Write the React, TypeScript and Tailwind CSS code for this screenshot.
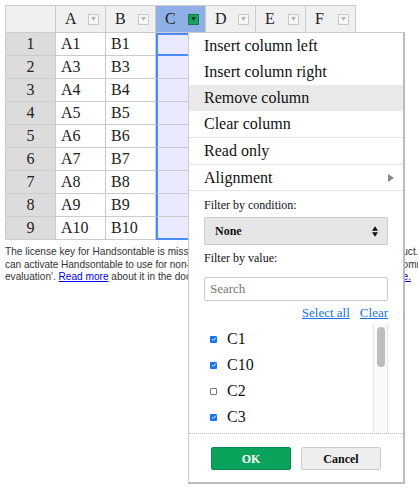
import React from "react";

const cols = ["A", "B", "C", "D", "E", "F"];
const rows = [
  ["A1", "B1"],
  ["A3", "B3"],
  ["A4", "B4"],
  ["A5", "B5"],
  ["A6", "B6"],
  ["A7", "B7"],
  ["A8", "B8"],
  ["A9", "B9"],
  ["A10", "B10"],
];

const serif = "font-['Liberation_Serif',_'Times_New_Roman',_serif]";

function HeaderButton({ active }: { active?: boolean }) {
  return (
    <span
      className={
        active
          ? "flex h-[11px] w-[11px] items-center justify-center border border-[#0b8043] bg-[#19a15f]"
          : "flex h-[11px] w-[11px] items-center justify-center border border-[#c8c8c8] bg-[#f7f7f7]"
      }
    >
      <svg viewBox="0 0 6 5" className="h-[4px] w-[5px]">
        <path d="M0 0h6L3 5z" fill={active ? "#0d3b22" : "#b5b5b5"} />
      </svg>
    </span>
  );
}

function Grid() {
  return (
    <div className={`${serif} inline-flex flex-col border-l border-t border-[#ccc] text-[16px] text-[#222]`}>
      <div className="flex h-[27px]">
        <div className="w-[50px] border-b border-r border-[#ccc] bg-[#f0f0f0]" />
        {cols.map((c) => (
          <div
            key={c}
            className={
              c === "C"
                ? "flex w-[50px] items-center border-b border-r border-[#ccc] bg-[#8eb0e7] pl-[9px]"
                : "flex w-[50px] items-center border-b border-r border-[#ccc] bg-[#f0f0f0] pl-[9px]"
            }
          >
            <span className="w-[23px]">{c}</span>
            <HeaderButton active={c === "C"} />
          </div>
        ))}
      </div>
      {rows.map((r, i) => (
        <div key={i} className="flex h-[23px]">
          <div className="flex w-[50px] items-center justify-center border-b border-r border-[#ccc] bg-[#dcdcdc]">
            {i + 1}
          </div>
          <div className="flex w-[50px] items-center border-b border-r border-[#ccc] pl-[5px]">{r[0]}</div>
          <div className="flex w-[50px] items-center border-b border-r border-[#ccc] pl-[5px]">{r[1]}</div>
          <div
            className={
              i === 0
                ? "w-[50px] border-2 border-[#4b89ff] bg-[#e9e9ff]"
                : i === rows.length - 1
                  ? "w-[50px] border-b-2 border-l-2 border-r border-[#ccc] border-b-[#4b89ff] border-l-[#4b89ff] bg-[#e9e9ff]"
                  : "w-[50px] border-b border-l-2 border-r border-[#ccc] border-l-[#4b89ff] bg-[#e9e9ff]"
            }
          />
          <div className="w-[50px] border-b border-r border-[#ccc]" />
          <div className="w-[50px] border-b border-r border-[#ccc]" />
          <div className="w-[50px] border-b border-r border-[#ccc]" />
        </div>
      ))}
    </div>
  );
}

function Check({ on }: { on: boolean }) {
  return on ? (
    <span className="flex h-[7px] w-[7px] items-center justify-center rounded-[1px] bg-[#1a73e8]">
      <svg viewBox="0 0 8 8" className="h-[6px] w-[6px]">
        <path d="M1.5 4.2 3.2 5.8 6.5 2.2" stroke="#fff" strokeWidth="1.3" fill="none" />
      </svg>
    </span>
  ) : (
    <span className="h-[7px] w-[7px] rounded-[1px] border border-[#777] bg-white" />
  );
}

const items = [
  { label: "Insert column left", h: "h-[26px]" },
  { label: "Insert column right", h: "h-[26px]" },
  { label: "Remove column", h: "h-[26px]", hover: true },
  { label: "Clear column", h: "h-[27px]", sep: true },
  { label: "Read only", h: "h-[27px]", sep: true },
  { label: "Alignment", h: "h-[26px]", sub: true, sep: true },
];

const values = [
  { v: "C1", on: true },
  { v: "C10", on: true },
  { v: "C2", on: false },
  { v: "C3", on: true },
  { v: "C4", on: true },
];

function Menu() {
  return (
    <div
      className={`${serif} absolute left-[188px] top-[32px] flex w-[217px] flex-col border-b-2 border-l border-r-2 border-t border-[#ccc] border-b-[#bbb] border-r-[#bbb] bg-white text-[16px] text-[#111]`}
    >
      {items.map((it) => (
        <div
          key={it.label}
          className={`flex ${it.h} items-center justify-between pl-[15px] pr-[9px] ${it.hover ? "bg-[#e9e9e9]" : ""} ${it.sep ? "border-b border-[#e6e6e6]" : ""}`}
        >
          <span>{it.label}</span>
          {it.sub && (
            <svg viewBox="0 0 6 8" className="h-[8px] w-[6px]">
              <path d="M0 0 6 4 0 8z" fill="#8a8a8a" />
            </svg>
          )}
        </div>
      ))}
      <div className="flex flex-col px-[15px] pt-[7px] text-[12px]">
        <div className="leading-[14px]">Filter by condition:</div>
        <div className="mt-[5px] flex h-[28px] items-center justify-between rounded-[2px] border border-[#ccc] bg-[#e6e6e6] pl-[10px] pr-[9px]">
          <span className="text-[12px] font-bold">None</span>
          <svg viewBox="0 0 7 12" className="h-[11px] w-[6px]">
            <path d="M0 5 3.5 0 7 5zM0 7h7l-3.5 5z" fill="#111" />
          </svg>
        </div>
        <div className="mt-[6px] leading-[14px]">Filter by value:</div>
        <div className="mt-[12px] flex h-[24px] items-center rounded-[2px] border border-[#ccc] px-[5px] text-[13px] text-[#777]">
          Search
        </div>
        <div className="mt-[4px] flex h-[15px] items-center justify-end gap-[10px] text-[13px] text-[#1a73e8]">
          <span className="underline">Select all</span>
          <span className="underline">Clear</span>
        </div>
        <div className="mt-[4px] flex h-[109px] overflow-hidden">
          <div className="flex flex-1 flex-col pt-[2px]">
            {values.map((x) => (
              <div key={x.v} className="flex h-[26px] shrink-0 items-center gap-[10px] pl-[6px] text-[16px]">
                <Check on={x.on} />
                <span>{x.v}</span>
              </div>
            ))}
          </div>
          <div className="flex w-[15px] justify-center border-x border-[#e6e6e6] bg-[#fafafa] pt-[3px]">
            <div className="h-[40px] w-[8px] rounded-full bg-[#bdbdbd]" />
          </div>
        </div>
      </div>
      <div className="flex h-[49px] items-start gap-[10px] border-t border-dotted border-[#bbb] pl-[22px] pt-[13px] text-[12px] font-bold">
        <div className="flex h-[23px] w-[80px] items-center justify-center rounded-[2px] border border-[#0d8a4e] bg-[#0aa35b] text-white">
          OK
        </div>
        <div className="flex h-[23px] w-[80px] items-center justify-center rounded-[2px] border border-[#ccc] bg-[#eee] text-[#111]">
          Cancel
        </div>
      </div>
    </div>
  );
}

export default function App() {
  return (
    <div className="relative h-[493px] w-[418px] overflow-hidden bg-white">
      <div className="p-[5px]">
        <Grid />
        <div className="mt-[6px] w-[406px] font-['Liberation_Sans',_Arial,_sans-serif] text-[10.1px] leading-[12.5px] text-[#333]">
          <div className="flex justify-between whitespace-nowrap">
            <span>The license key for Handsontable is missing. Use your purchased key to activate the</span>
            <span>product.</span>
          </div>
          <div className="whitespace-nowrap tracking-[-0.05px]">
            can activate Handsontable to use for non-commercial purposes by passing the key: 'non-commercial-and-
          </div>
          <div className="flex justify-between whitespace-nowrap">
            <span>
              evaluation'. <a className="text-[#0000ee] underline">Read more</a> about it in the documentation of
            </span>
            <a className="text-[#0000ee] underline">Handsontable.</a>
          </div>
        </div>
      </div>
      <Menu />
    </div>
  );
}
